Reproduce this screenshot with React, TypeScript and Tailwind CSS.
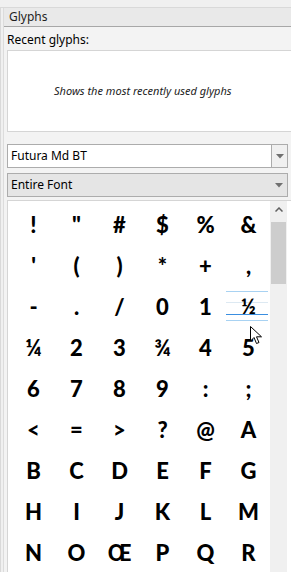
import React from 'react';

const glyphRows: string[][] = [
  ['!', '"', '#', '$', '%', '&'],
  ["'", '(', ')', '*', '+', ','],
  ['-', '.', '/', '0', '1', '½'],
  ['¼', '2', '3', '¾', '4', '5'],
  ['6', '7', '8', '9', ':', ';'],
  ['<', '=', '>', '?', '@', 'A'],
  ['B', 'C', 'D', 'E', 'F', 'G'],
  ['H', 'I', 'J', 'K', 'L', 'M'],
  ['N', 'O', 'Œ', 'P', 'Q', 'R'],
];

const DropArrow: React.FC = () => (
  <svg width="8" height="5" viewBox="0 0 8 5">
    <path d="M0 0 H8 L4 4.5 Z" fill="#707070" />
  </svg>
);

const Combo: React.FC<{ label: string; editable?: boolean }> = ({ label, editable }) => (
  <div
    className={`flex h-[24px] w-[281px] items-stretch border border-[#acacac] ${
      editable ? 'bg-white' : 'bg-[#e5e5e5]'
    }`}
  >
    <div className="flex flex-1 items-center pl-[3px] text-[12px] text-black">{label}</div>
    <div
      className={`flex w-[16px] items-center justify-center ${
        editable ? 'border-l border-[#acacac] bg-[#f0f0f0]' : ''
      }`}
    >
      <DropArrow />
    </div>
  </div>
);

const App: React.FC = () => {
  return (
    <div
      className="relative h-[572px] w-[291px] overflow-hidden bg-[#f0f0f0] pt-[7px]"
      style={{ fontFamily: '"Noto Sans", "Open Sans", sans-serif' }}
    >
      <div className="flex h-[565px] border-l border-t border-[#d9d9d9] pl-[2px]">
        <div className="flex flex-1 flex-col border-l border-[#dcdcdc] bg-[#f3f3f3]">
          {/* Header */}
          <div className="flex h-[23px] items-center justify-between border-b border-[#a7a7a7] bg-[#e9e9e9] pl-[5px]">
            <span className="text-[12px] text-[#1e1e1e]">Glyphs</span>
            <svg width="10" height="8" viewBox="0 0 10 8" className="mr-[-1px]">
              <path d="M0 0 L4 4 L0 8 Z" fill="#bcbcbc" />
              <path d="M5 0 L9 4 L5 8 Z" fill="#bcbcbc" />
            </svg>
          </div>

          <div className="flex flex-col pl-[3px]">
            <div className="mt-[4px] h-[18px] text-[12px] leading-[18px] text-black">Recent glyphs:</div>
            <div className="mt-[1px] flex h-[82px] w-[300px] items-center border border-[#d5d5d5] bg-white pl-[46px]">
              <span className="text-[11px] italic text-[#222]">Shows the most recently used glyphs</span>
            </div>

            <div className="mt-[12px]">
              <Combo label="Futura Md BT" editable />
            </div>
            <div className="mt-[5px]">
              <Combo label="Entire Font" />
            </div>

            {/* Glyph grid */}
            <div className="mt-[3px] flex h-[400px] w-[300px] border-l border-t border-[#d5d5d5] bg-white">
              <div className="relative w-[262px] pl-[4px] pt-[3px]">
                <div className="grid grid-cols-[repeat(6,43px)] auto-rows-[41px]">
                  {glyphRows.flat().map((g, i) => (
                    <div
                      key={i}
                      className="relative flex items-center justify-center text-[22px] font-black leading-none text-black"
                      style={{ fontFamily: 'Lato, "DejaVu Sans", sans-serif' }}
                    >
                      {g === '½' ? (
                        <>
                          <div className="absolute left-[-1px] right-[2px] top-[5px] border-t border-[#a8d2f2]" />
                          <div className="absolute left-[-1px] right-[2px] top-[16px] border-t border-[#dde9f2]" />
                          <div className="absolute left-[-1px] right-[2px] top-[28px] border-t-[1.5px] border-[#3a8ee0]" />
                          <div className="absolute left-[-1px] right-[2px] top-[34px] border-t border-[#a8d2f2]" />
                          <span className="relative top-[-1px] text-[20px]">½</span>
                        </>
                      ) : (
                        g
                      )}
                    </div>
                  ))}
                </div>
              </div>
              {/* Scrollbar */}
              <div className="flex w-[17px] flex-col bg-[#f0f0f0]">
                <div className="flex h-[17px] items-center justify-center">
                  <svg width="8" height="5" viewBox="0 0 8 5">
                    <path d="M0.5 4.5 L4 1 L7.5 4.5" stroke="#606060" strokeWidth="1.5" fill="none" />
                  </svg>
                </div>
                <div className="mx-[1px] mt-[4px] h-[62px] bg-[#cdcdcd]" />
              </div>
            </div>
          </div>
        </div>
      </div>

      {/* Mouse cursor over the grid */}
      <svg
        className="absolute left-[250px] top-[326px]"
        width="14"
        height="20"
        viewBox="0 0 14 20"
      >
        <path
          d="M0.5 0.5 L0.5 15 L4 11.5 L6.5 17.5 L9 16.5 L6.5 10.8 L11.5 10.8 Z"
          fill="white"
          stroke="black"
          strokeWidth="1"
          strokeLinejoin="round"
        />
      </svg>
    </div>
  );
};

export default App;
